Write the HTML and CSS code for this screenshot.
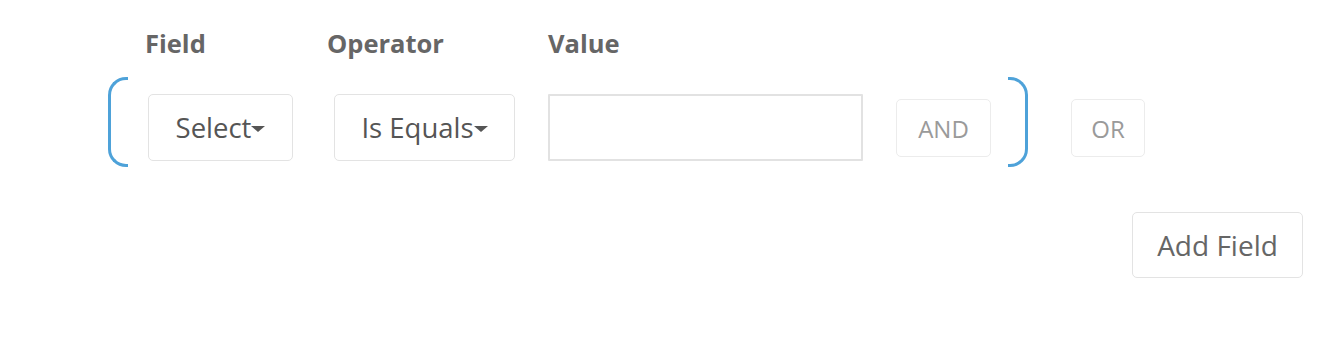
FILE: index.html
```html
<!DOCTYPE html>
<html lang="en">
<head>
<meta charset="utf-8">
<title>Query Builder</title>
<link rel="stylesheet" href="styles.css">
</head>
<body>
<div class="builder">
  <div class="labels">
    <div class="label label-field">Field</div>
    <div class="label label-operator">Operator</div>
    <div class="label label-value">Value</div>
  </div>
  <div class="rule-row">
    <div class="group">
      <span class="bracket bracket-left"></span>
      <button class="dropdown dropdown-field">Select<span class="caret"></span></button>
      <button class="dropdown dropdown-operator">Is Equals<span class="caret"></span></button>
      <input class="value-input" type="text">
      <button class="logic logic-and">AND</button>
      <span class="bracket bracket-right"></span>
    </div>
    <button class="logic logic-or">OR</button>
  </div>
  <div class="actions">
    <button class="add-field">Add Field</button>
  </div>
</div>
</body>
</html>
```

FILE: styles.css
```css
* { box-sizing: border-box; }
html, body { margin: 0; padding: 0; background: #fff; }
body {
  font-family: "Open Sans", "Liberation Sans", sans-serif;
  color: #666;
  width: 1330px;
  height: 362px;
  overflow: hidden;
}
.builder {
  padding: 28px 27px 0 108px;
}
.labels {
  display: flex;
  height: 30px;
  line-height: 30px;
}
.label {
  font-weight: 700;
  font-size: 25.5px;
  color: #666;
}
.label-field { margin-left: 37px; width: 182px; }
.label-operator { width: 221px; }
.rule-row {
  margin-top: 19px;
  display: flex;
  align-items: flex-start;
  height: 90px;
}
.group {
  display: flex;
  align-items: flex-start;
  height: 90px;
}
.bracket {
  width: 20px;
  height: 90px;
  border: 3px solid #4ea2d9;
}
.bracket-left {
  border-right: none;
  border-radius: 18px 0 0 18px;
  margin-right: 20px;
}
.bracket-right {
  border-left: none;
  border-radius: 0 18px 18px 0;
  margin-left: 17px;
}
button {
  font-family: inherit;
  background: #fff;
  cursor: pointer;
}
.dropdown {
  margin-top: 17px;
  height: 67px;
  border: 1px solid #e3e3e3;
  border-radius: 5px;
  font-size: 27.5px;
  color: #555;
  display: flex;
  align-items: center;
  justify-content: center;
  padding: 0;
}
.dropdown-field { width: 145px; margin-right: 41px; }
.dropdown-operator { width: 181px; margin-right: 33px; }
.caret {
  display: inline-block;
  width: 0;
  height: 0;
  border-left: 7px solid transparent;
  border-right: 7px solid transparent;
  border-top: 6px solid #555;
  margin-left: 0;
  margin-top: 2px;
}
.value-input {
  margin-top: 17px;
  width: 315px;
  height: 67px;
  border: 2px solid #e2e2e2;
  border-radius: 1px;
  margin-right: 33px;
  font-family: inherit;
  font-size: 24px;
  outline: none;
}
.logic {
  margin-top: 22px;
  height: 58px;
  border: 1px solid #ececec;
  border-radius: 5px;
  font-size: 24px;
  color: #9a9a9a;
  padding: 0;
}
.logic-and { width: 95px; }
.logic-or { width: 74px; margin-left: 43px; }
.actions {
  display: flex;
  justify-content: flex-end;
  margin-top: 45px;
}
.add-field {
  width: 171px;
  height: 66px;
  border: 1px solid #e3e3e3;
  border-radius: 5px;
  font-size: 28px;
  color: #666;
  padding: 0;
}
```
